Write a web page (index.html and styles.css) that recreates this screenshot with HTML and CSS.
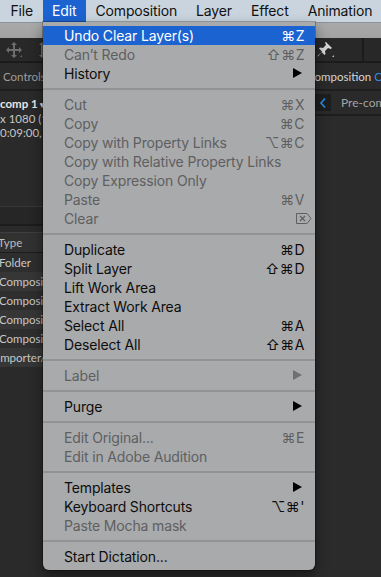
FILE: index.html
```html
<!DOCTYPE html>
<html>
<head>
<meta charset="utf-8">
<link rel="stylesheet" href="styles.css">
</head>
<body>
<div class="screen">
  <div class="menubar">
    <span class="mb-item">File</span>
    <span class="mb-item active">Edit</span>
    <span class="mb-item">Composition</span>
    <span class="mb-item">Layer</span>
    <span class="mb-item">Effect</span>
    <span class="mb-item">Animation</span>
  </div>
  <div class="titlebar"></div>
  <div class="toolbar">
    <div class="tools-left">
      <svg class="tool" width="20" height="20" viewBox="0 0 20 20"><path d="M10 2 L13 5 H11 V9 H15 V7 L18 10 L15 13 V11 H11 V15 H13 L10 18 L7 15 H9 V11 H5 V13 L2 10 L5 7 V9 H9 V5 H7 Z" fill="#6d6d6d"/><path d="M16 17 L18 17 L18 15 Z" fill="#6d6d6d"/></svg>
      <svg class="tool" width="10" height="20" viewBox="0 0 10 20"><path d="M5 2 L8 5 H6 V15 H8 L5 18 L2 15 H4 V5 H2 Z" fill="#6d6d6d"/></svg>
    </div>
    <div class="tools-right">
      <svg class="pin" width="20" height="20" viewBox="0 0 20 20"><path d="M11 2 L17 8 L15.5 9 L13 8 L10 11 L10.5 14 L9.5 15 L6.5 12 L3 16.5 L2.5 16 L7 11.5 L4 8.5 L5 7.5 L8 8 L11 5 L10 2.5 Z" fill="#d6d6d6"/><path d="M17 17 L19 17 L19 15 Z" fill="#bdbdbd"/></svg>
      <div class="tb-divider"></div>
    </div>
  </div>
  <div class="panels">
    <div class="panel-left">
      <div class="tabrow"><span class="tab-dim">Controls</span></div>
      <div class="compinfo">
        <div class="ci-name">comp 1 <span class="caret">▾</span></div>
        <div>x 1080 (1.00)</div>
        <div>0:09:00, 29.97 fps</div>
      </div>
      <div class="search-band"></div>
      <div class="list">
        <div class="list-head">Type</div>
        <div class="row">Folder</div>
        <div class="row alt">Composition</div>
        <div class="row">Composition</div>
        <div class="row alt">Composition</div>
        <div class="row">Composition</div>
        <div class="row alt imp">Importer/MPEG</div>
      </div>
    </div>
    <div class="panel-mid"></div>
    <div class="panel-right">
      <div class="tabrow"><span class="tab-title">Composition</span><span class="tab-link">Comp 1</span></div>
      <div class="crumbs"><span class="back"><svg width="8" height="12" viewBox="0 0 8 12"><path d="M6 1.5 L2 6 L6 10.5" fill="none" stroke="#2f8de4" stroke-width="1.6"/></svg></span><span class="crumb">Pre-comp 1</span></div>
      <div class="viewer"></div>
    </div>
  </div>

  <div class="menu">
    <div class="mi hl"><span class="lbl">Undo Clear Layer(s)</span><span class="sc">⌘Z</span></div>
    <div class="mi dis"><span class="lbl">Can’t Redo</span><span class="sc">⇧⌘Z</span></div>
    <div class="mi"><span class="lbl">History</span><span class="arrow"></span></div>
    <div class="sep"></div>
    <div class="mi dis"><span class="lbl">Cut</span><span class="sc">⌘X</span></div>
    <div class="mi dis"><span class="lbl">Copy</span><span class="sc">⌘C</span></div>
    <div class="mi dis"><span class="lbl">Copy with Property Links</span><span class="sc">⌥⌘C</span></div>
    <div class="mi dis"><span class="lbl">Copy with Relative Property Links</span></div>
    <div class="mi dis"><span class="lbl">Copy Expression Only</span></div>
    <div class="mi dis"><span class="lbl">Paste</span><span class="sc">⌘V</span></div>
    <div class="mi dis"><span class="lbl">Clear</span><svg class="clear-key" width="16" height="11" viewBox="0 0 16 11"><path d="M0.5 0.5 H11 L15 5.5 L11 10.5 H0.5 Z" fill="none" stroke="#5e5f61" stroke-width="1"/><path d="M4 3 L9 8 M9 3 L4 8" stroke="#5e5f61" stroke-width="1.2"/></svg></div>
    <div class="sep"></div>
    <div class="mi"><span class="lbl">Duplicate</span><span class="sc">⌘D</span></div>
    <div class="mi"><span class="lbl">Split Layer</span><span class="sc">⇧⌘D</span></div>
    <div class="mi"><span class="lbl">Lift Work Area</span></div>
    <div class="mi"><span class="lbl">Extract Work Area</span></div>
    <div class="mi"><span class="lbl">Select All</span><span class="sc">⌘A</span></div>
    <div class="mi"><span class="lbl">Deselect All</span><span class="sc">⇧⌘A</span></div>
    <div class="sep"></div>
    <div class="mi dis"><span class="lbl">Label</span><span class="arrow"></span></div>
    <div class="sep"></div>
    <div class="mi"><span class="lbl">Purge</span><span class="arrow"></span></div>
    <div class="sep"></div>
    <div class="mi dis"><span class="lbl">Edit Original...</span><span class="sc">⌘E</span></div>
    <div class="mi dis"><span class="lbl">Edit in Adobe Audition</span></div>
    <div class="sep"></div>
    <div class="mi"><span class="lbl">Templates</span><span class="arrow"></span></div>
    <div class="mi"><span class="lbl">Keyboard Shortcuts</span><span class="sc">⌥⌘'</span></div>
    <div class="mi dis"><span class="lbl">Paste Mocha mask</span></div>
    <div class="sep"></div>
    <div class="mi"><span class="lbl">Start Dictation...</span></div>
  </div>
</div>
</body>
</html>
```

FILE: styles.css
```css
* { box-sizing: border-box; }
html, body { margin: 0; padding: 0; }
body {
  width: 381px;
  height: 577px;
  overflow: hidden;
  background: #2a2a2a;
  font-family: Inter, "Noto Sans", sans-serif;
}
.screen {
  position: relative;
  width: 381px;
  height: 577px;
  overflow: hidden;
  display: flex;
  flex-direction: column;
}

/* menu bar */
.menubar {
  height: 23px;
  flex: none;
  display: flex;
  align-items: stretch;
  background: #c9d4de;
  border-bottom: 1px solid #8894a0;
  padding-left: 1px;
}
.mb-item {
  display: flex;
  align-items: center;
  padding: 0 9.5px 1px;
  font-size: 14px;
  color: #111;
  letter-spacing: -0.15px;
  white-space: nowrap;
}
.mb-item.active {
  background: #1c63d2;
  color: #fff;
}

.titlebar {
  height: 15px;
  flex: none;
  background: linear-gradient(#a9a9a9, #a2a2a2);
}

.toolbar {
  height: 25px;
  flex: none;
  background: #282828;
  border-bottom: 2px solid #1b1b1b;
  display: flex;
  justify-content: space-between;
  align-items: center;
}
.tools-left {
  display: flex;
  align-items: center;
  gap: 13px;
  padding-left: 4px;
}
.tools-right {
  display: flex;
  align-items: stretch;
  height: 100%;
}
.pin { align-self: center; margin-right: 27px; }
.tb-divider {
  width: 2px;
  background: #1c1c1c;
  margin-right: 17px;
}

.panels {
  flex: 1;
  display: flex;
  font-family: Lato, "Open Sans", sans-serif;
  font-size: 11px;
  white-space: nowrap;
}
.panel-left {
  width: 43px;
  flex: none;
  overflow: hidden;
  display: flex;
  flex-direction: column;
  background: #2a2a2a;
}
.panel-mid {
  flex: 1;
  background: #2a2a2a;
}
.panel-right {
  width: 66px;
  flex: none;
  overflow: hidden;
  display: flex;
  flex-direction: column;
  background: #2a2a2a;
}
.tabrow {
  height: 28px;
  flex: none;
  display: flex;
  align-items: center;
  background: #2a2a2a;
  border-bottom: 2px solid #1e1e1e;
  font-size: 11.5px;
}
.tab-dim { color: #9d9d9d; padding-left: 3px; }
.tab-title { color: #d6d6d6; margin-left: -8px; margin-right: 3px; }
.tab-link { color: #2d8ce6; }

.compinfo {
  padding: 6px 0 0 0;
  color: #c6c6c6;
  line-height: 14px;
  font-size: 11.5px;
}
.ci-name { color: #e6e6e6; font-weight: 700; }
.caret { font-size: 9px; }
.search-band {
  flex: none;
  margin-top: 66px;
  height: 20px;
  background: #262626;
  border-top: 1px solid #383838;
  border-bottom: 2px solid #1c1c1c;
}
.list { margin-top: 6px; }
.list-head {
  height: 21px;
  display: flex;
  align-items: center;
  background: #313131;
  color: #bdbdbd;
  border-top: 1px solid #3e3e3e;
  border-bottom: 1px solid #1c1c1c;
  margin-left: -2px;
  padding-bottom: 1px;
  font-size: 11.5px;
}
.row {
  height: 19px;
  display: flex;
  align-items: center;
  color: #c8c8c8;
  background: #2e2e2e;
  margin-left: -1px;
  font-size: 11.5px;
}
.row.alt { background: #363636; }
.row.imp { margin-left: -3px; }

.crumbs {
  height: 25px;
  flex: none;
  display: flex;
  align-items: center;
  border-bottom: 2px solid #1d1d1d;
}
.back {
  flex: none;
  width: 16px;
  height: 17px;
  display: flex;
  align-items: center;
  justify-content: center;
  background: #1e1e1e;
  margin-right: 10px;
}
.crumb { color: #a3a3a3; font-size: 12px; }
.viewer { flex: 1; background: #2b2b2b; }

/* dropdown menu */
.menu {
  position: absolute;
  left: 43px;
  top: 22px;
  width: 272px;
  padding: 4px 0 4px;
  background: #a9aaac;
  border-radius: 0 0 6px 6px;
  box-shadow: 0 6px 14px rgba(0,0,0,0.45), 0 0 0 1px rgba(0,0,0,0.25);
  font-family: Inter, "Noto Sans", sans-serif;
  font-size: 14px;
  letter-spacing: -0.15px;
  white-space: nowrap;
}
.mi {
  height: 19px;
  display: flex;
  align-items: center;
  justify-content: space-between;
  padding: 0 10px 1px 21px;
  color: #0d0d0d;
}
.mi.dis { color: #5e5f61; }
.mi.hl { background: #1c63d2; color: #fff; }
.sc {
  font-family: Inter, "DejaVu Sans", sans-serif;
  letter-spacing: 0.5px;
}
.arrow {
  width: 0;
  height: 0;
  border-left: 9px solid #000;
  border-top: 5px solid transparent;
  border-bottom: 5px solid transparent;
  margin-right: 3px;
}
.mi.dis .arrow { border-left-color: #6f7072; }
.clear-key { margin-right: -7px; }
.sep {
  height: 12px;
  display: flex;
  align-items: center;
}
.sep::before {
  content: "";
  flex: 1;
  height: 2px;
  background: #929395;
}
```
